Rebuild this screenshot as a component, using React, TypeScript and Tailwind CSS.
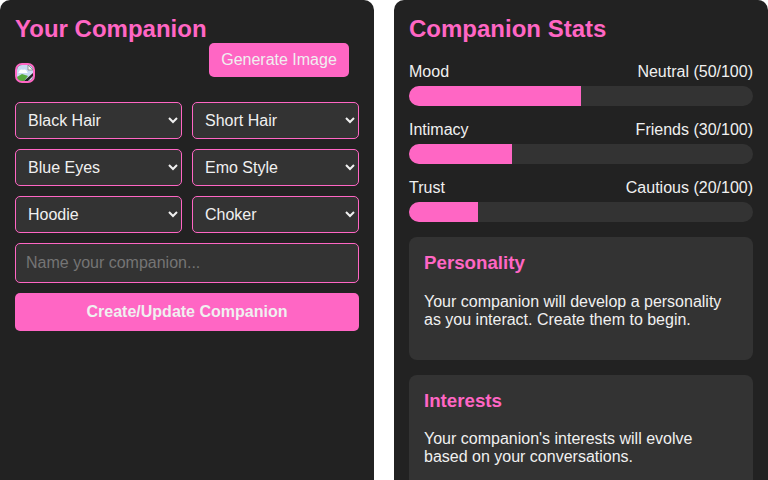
const font = "font-['Liberation_Sans',Arial,sans-serif]";

function BrokenImage() {
  return (
    <svg width="16" height="16" viewBox="0 0 16 16" className="block">
      <rect x="0" y="0" width="16" height="16" fill="#c9d9f2" />
      <path d="M2 7c0-2 2-3 4-2 2-1 4 0 4 2 1 0 1 1 0 1H2c-1 0-1-1 0-1z" fill="#fff" />
      <path d="M0 16v-4l5-3 3 1 3 1-4 5z" fill="#56a83c" />
      <path d="M7 16l9-8v3l-5 5z" fill="#222222" />
      <path d="M11 0v5h5z" fill="#f4f4f4" stroke="#777777" strokeWidth="0.7" />
    </svg>
  );
}

function Select({ value }: { value: string }) {
  return (
    <select
      defaultValue={value}
      className="w-full h-[37px] px-2 bg-[#333333] text-[#f0f0f0] text-base border border-[#ff66c4] rounded-[5px] appearance-auto"
    >
      <option>{value}</option>
    </select>
  );
}

function Stat({ label, value, pct }: { label: string; value: string; pct: number }) {
  return (
    <div className="mb-[15px]">
      <div className="flex justify-between text-[#f0f0f0] text-base leading-[18px] mb-[5px]">
        <span>{label}</span>
        <span>{value}</span>
      </div>
      <div className="h-5 rounded-[10px] bg-[#333333] overflow-hidden">
        <div className="h-full bg-[#ff66c4]" style={{ width: `${pct}%` }} />
      </div>
    </div>
  );
}

function Card({ title, body, className }: { title: string; body: string; className: string }) {
  return (
    <section className={`bg-[#333333] rounded-lg p-[15px] ${className}`}>
      <h3 className="text-[#ff66c4] text-[18.72px] leading-[21.5px] font-bold mb-[19.1px]">{title}</h3>
      <p className="text-[#f0f0f0] text-base leading-[18px]">{body}</p>
    </section>
  );
}

export default function App() {
  return (
    <div className={`${font} w-[768px] h-[480px] overflow-hidden bg-white flex gap-5`}>
      <div className="w-[374px] h-[520px] bg-[#222222] rounded-[10px] p-[15px] shrink-0">
        <h2 className="text-[#ff66c4] text-2xl leading-[28px] font-bold">Your Companion</h2>
        <div className="flex items-start h-[59px]">
          <div className="mt-5 w-5 h-5 border-2 border-[#ff66c4] rounded-[7px] overflow-hidden">
            <BrokenImage />
          </div>
          <button className="ml-auto mr-[10px] h-[34px] w-[140px] bg-[#ff66c4] text-[#f0f0f0] text-base rounded-[5px]">
            Generate Image
          </button>
        </div>
        <div className="grid grid-cols-2 gap-[10px]">
          <Select value="Black Hair" />
          <Select value="Short Hair" />
          <Select value="Blue Eyes" />
          <Select value="Emo Style" />
          <Select value="Hoodie" />
          <Select value="Choker" />
        </div>
        <input
          placeholder="Name your companion..."
          className="mt-[10px] block w-full h-10 px-[10px] bg-[#333333] text-[#f0f0f0] text-base border border-[#ff66c4] rounded-[5px] placeholder:text-[#757575] outline-none"
        />
        <button className="mt-[10px] block w-full h-[38px] bg-[#ff66c4] text-[#f0f0f0] text-base font-bold rounded-[5px]">
          Create/Update Companion
        </button>
      </div>
      <div className="w-[374px] h-[520px] bg-[#222222] rounded-[10px] p-[15px] shrink-0">
        <h2 className="text-[#ff66c4] text-2xl leading-[28px] font-bold mb-[20px]">Companion Stats</h2>
        <Stat label="Mood" value="Neutral (50/100)" pct={50} />
        <Stat label="Intimacy" value="Friends (30/100)" pct={30} />
        <Stat label="Trust" value="Cautious (20/100)" pct={20} />
        <Card
          className="mt-[0.4px] h-[122.6px] mb-[15px]"
          title="Personality"
          body="Your companion will develop a personality as you interact. Create them to begin."
        />
        <Card
          className="h-[123px]"
          title="Interests"
          body="Your companion's interests will evolve based on your conversations."
        />
      </div>
    </div>
  );
}
